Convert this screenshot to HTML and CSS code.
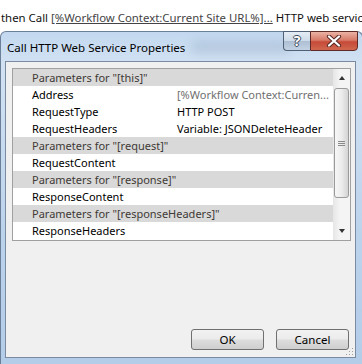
FILE: index.html
```html
<!DOCTYPE html>
<html>
<head lang="en">
    <meta charset="UTF-8">
    <title>Call HTTP Web Service Properties</title>
    <link rel="stylesheet" href="styles.css">
</head>
<body>
<div class="context">then Call <a href="javascript:void(0)" class="link">[%Workflow Context:Current Site URL%]...</a> HTTP web servic</div>
<div class="window">
    <div class="titlebar">
        <span class="blur"></span>
        <span class="title">Call HTTP Web Service Properties</span>
        <div class="caption">
            <span class="btn-help">?</span>
            <span class="btn-close">
                <svg width="20" height="12" viewBox="0 0 20 12">
                    <path d="M5 1.5 L15 10.5 M15 1.5 L5 10.5" stroke="#5a2a26" stroke-width="4.2" stroke-linecap="round"/>
                    <path d="M5 1.5 L15 10.5 M15 1.5 L5 10.5" stroke="#fff" stroke-width="2.2" stroke-linecap="round"/>
                </svg>
            </span>
        </div>
    </div>
    <div class="client">
        <div class="grid">
            <div class="rows">
                <div class="row cat">Parameters for "[this]"</div>
                <div class="row"><span class="name">Address</span><span class="value dim">[%Workflow Context:Curren...</span></div>
                <div class="row"><span class="name">RequestType</span><span class="value">HTTP POST</span></div>
                <div class="row"><span class="name">RequestHeaders</span><span class="value">Variable: JSONDeleteHeader</span></div>
                <div class="row cat">Parameters for "[request]"</div>
                <div class="row"><span class="name">RequestContent</span><span class="value"></span></div>
                <div class="row cat">Parameters for "[response]"</div>
                <div class="row"><span class="name">ResponseContent</span><span class="value"></span></div>
                <div class="row cat">Parameters for "[responseHeaders]"</div>
                <div class="row"><span class="name">ResponseHeaders</span><span class="value"></span></div>
            </div>
            <div class="scrollbar">
                <span class="arrow up"></span>
                <div class="track">
                    <div class="thumb"><span class="grip"></span></div>
                </div>
                <span class="arrow down"></span>
            </div>
        </div>
        <div class="buttons">
            <a href="javascript:void(0)" class="button">OK</a>
            <a href="javascript:void(0)" class="button">Cancel</a>
        </div>
        <svg class="sizegrip" width="8" height="8" viewBox="0 0 8 8">
            <rect x="6" y="0" width="1" height="1" fill="#a0a0a0"/>
            <rect x="3" y="3" width="1" height="1" fill="#a0a0a0"/>
            <rect x="6" y="3" width="1" height="1" fill="#a0a0a0"/>
            <rect x="0" y="6" width="1" height="1" fill="#a0a0a0"/>
            <rect x="3" y="6" width="1" height="1" fill="#a0a0a0"/>
            <rect x="6" y="6" width="1" height="1" fill="#a0a0a0"/>
        </svg>
    </div>
</div>
</body>
</html>
```

FILE: styles.css
```css
*
{
    margin: 0;
    padding: 0;
    box-sizing: border-box;
}
body
{
    width: 362px;
    height: 364px;
    overflow: hidden;
    background: #fff;
    font-family: "Noto Sans", "Open Sans", sans-serif;
    font-size: 11px;
    color: #000;
}
.context
{
    height: 31px;
    padding: 9px 0 0 1px;
    white-space: nowrap;
    overflow: hidden;
    font-size: 11.4px;
    line-height: 17px;
    color: #111;
}
.link
{
    color: #444;
    text-decoration: underline;
}
.window
{
    position: relative;
    height: 333px;
    width: 363px;
    border: 1px solid #6b7f98;
    border-bottom: none;
    border-radius: 6px 6px 0 0;
    background: linear-gradient(180deg, #c3d8ef 0%, #d2e2f3 10%, #bcd3ec 60%, #b3cce8 100%);
    display: flex;
    flex-direction: column;
}
.titlebar
{
    position: relative;
    height: 29px;
    padding: 8px 0 0 6px;
    display: flex;
}
.blur
{
    position: absolute;
    left: 190px;
    top: 8px;
    width: 100px;
    height: 14px;
    border-radius: 7px;
    background: rgba(150, 170, 195, .35);
    filter: blur(5px);
}
.title
{
    position: relative;
    font-size: 11.5px;
    line-height: 16px;
    color: #000;
}
.caption
{
    position: absolute;
    top: -1px;
    right: 4px;
    display: flex;
    height: 20px;
}
.btn-help
{
    width: 27px;
    height: 20px;
    border: 1px solid #4f6077;
    border-right: none;
    border-radius: 0 0 0 4px;
    background: linear-gradient(180deg, #e4ecf5 0%, #cfdbe9 48%, #aebfd4 52%, #c3d2e3 100%);
    color: #fff;
    font-weight: bold;
    font-size: 14px;
    line-height: 17px;
    text-align: center;
    text-shadow: 1px 0 0 #3b4a5c, -1px 0 0 #3b4a5c, 0 1px 0 #3b4a5c, 0 -1px 0 #3b4a5c;
}
.btn-close
{
    width: 48px;
    height: 20px;
    border: 1px solid #5e2a25;
    border-radius: 0 0 4px 0;
    background: linear-gradient(180deg, #eab2a4 0%, #d77b69 45%, #c64a38 55%, #d0674f 100%);
    display: flex;
    align-items: center;
    justify-content: center;
}
.client
{
    position: relative;
    margin: 0 6px 0 4px;
    height: 297px;
    border: 1px solid #7a8ba1;
    background: #f0f0f0;
    padding: 6px 6px 7px 6px;
    display: flex;
    flex-direction: column;
}
.grid
{
    height: 173px;
    width: 339px;
    border: 1px solid #a0a0a0;
    background: #fff;
    display: flex;
}
.rows
{
    flex: 1;
    min-width: 0;
}
.row
{
    height: 17px;
    display: flex;
    line-height: 17px;
    white-space: nowrap;
    overflow: hidden;
}
.row.cat
{
    background: #d9d9d9;
    color: #3f3a36;
    padding-left: 19px;
}
.name
{
    width: 164px;
    padding-left: 19px;
}
.value
{
    flex: 1;
}
.value.dim
{
    color: #707070;
}
.scrollbar
{
    width: 17px;
    flex-shrink: 0;
    background: linear-gradient(90deg, #e6e6e6, #f4f4f4 40%, #f4f4f4);
    display: flex;
    flex-direction: column;
    align-items: center;
}
.arrow
{
    width: 0;
    height: 0;
    border-left: 3.5px solid transparent;
    border-right: 3.5px solid transparent;
    margin: 7px 0;
}
.arrow.up
{
    border-bottom: 4px solid #333;
}
.arrow.down
{
    border-top: 4px solid #333;
}
.track
{
    flex: 1;
    width: 100%;
    padding: 1px 1px;
}
.thumb
{
    height: 110px;
    border: 1px solid #9a9a9a;
    border-radius: 3px;
    background: linear-gradient(90deg, #f7f7f7 0%, #ececec 50%, #d4d4d4 100%);
    display: flex;
    align-items: center;
    justify-content: center;
}
.grip
{
    width: 7px;
    height: 5px;
    border-top: 1px solid #8a8a8a;
    border-bottom: 1px solid #8a8a8a;
    background: linear-gradient(180deg, transparent 1px, #8a8a8a 1px, #8a8a8a 2px, transparent 2px);
}
.buttons
{
    margin-top: auto;
    display: flex;
    justify-content: flex-end;
    gap: 12px;
}
.button
{
    width: 73px;
    height: 21px;
    border: 1px solid #707070;
    border-radius: 3px;
    background: linear-gradient(180deg, #f2f2f2 0%, #ebebeb 48%, #dddddd 52%, #cfcfcf 100%);
    color: #000;
    text-decoration: none;
    text-align: center;
    line-height: 19px;
    font-size: 11.5px;
}
.sizegrip
{
    position: absolute;
    right: 1px;
    bottom: 1px;
}
```
